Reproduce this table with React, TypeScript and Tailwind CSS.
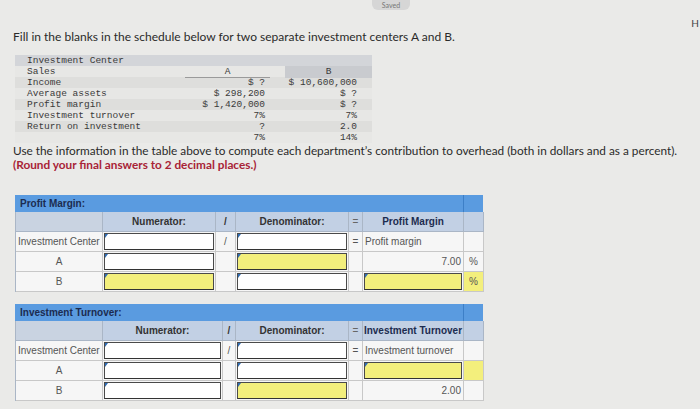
import React from "react";

type Cell =
  | { kind: "text"; text: string; align?: "left" | "center" | "right"; bold?: boolean; bg?: string }
  | { kind: "input"; yellow?: boolean; value?: string }
  | { kind: "empty"; bg?: string };

const dataRows: [string, string, string][] = [
  ["Investment Center", "", ""],
  ["Sales", "A", "B"],
  ["Income", "$ ?", "$ 10,600,000"],
  ["Average assets", "$ 298,200", "$ ?"],
  ["Profit margin", "$ 1,420,000", "$ ?"],
  ["Investment turnover", "7%", "7%"],
  ["Return on investment", "?", "2.0"],
  ["", "7%", "14%"],
];

function Marker() {
  return (
    <span className="absolute left-0 top-0 h-0 w-0 border-r-[3px] border-t-[4px] border-r-transparent border-t-[#2f6db5]" />
  );
}

function InputCell({ yellow, value }: { yellow?: boolean; value?: string }) {
  return (
    <div
      className={`relative mx-[1px] my-[1px] flex h-[17px] items-center justify-end border border-[#4a4a4a] border-b-[#333] px-[3px] text-[#444] ${
        yellow ? "bg-[#f3ef7c]" : "bg-white"
      }`}
    >
      <Marker />
      {value}
    </div>
  );
}

function RatioTable({
  title,
  result,
  rows,
  widths,
}: {
  title: string;
  result: string;
  rows: Cell[][];
  widths: string;
}) {
  return (
    <div className="w-[468px] text-[10px] text-[#333]" style={{ fontFamily: '"Liberation Sans", Arial, sans-serif' }}>
      <div className="flex h-[17px] bg-[#5a9be0]">
        <div className="flex flex-1 items-center px-[5px] font-bold text-[#1c2c50]">{title}</div>
        <div className="w-[20px] border-l border-[#3d7fc7]" />
      </div>
      <div className={`grid ${widths} border-l border-[#aab6c6] bg-[#f6f6f6]`}>
        <div className="h-[20px] border-b border-r border-[#aab6c6] bg-[#c9d3e1]" />
        <div className="flex items-center justify-center border-b border-r border-[#aab6c6] bg-[#c2d0e4] font-bold">Numerator:</div>
        <div className="flex items-center justify-center border-b border-r border-[#aab6c6] bg-[#c2d0e4] font-bold">/</div>
        <div className="flex items-center justify-center border-b border-r border-[#aab6c6] bg-[#c2d0e4] font-bold">Denominator:</div>
        <div className="flex items-center justify-center border-b border-r border-[#aab6c6] bg-[#c2d0e4] text-[#666]">=</div>
        <div className="flex items-center justify-center border-b border-r border-[#aab6c6] bg-[#c2d0e4] font-bold text-[#1c2c50]">{result}</div>
        <div className="border-b border-r border-[#aab6c6] bg-[#c2d0e4]" />
        {rows.map((row, ri) =>
          row.map((cell, ci) => {
            const key = `${ri}-${ci}`;
            if (cell.kind === "input") {
              return (
                <div key={key} className="border-b border-r border-[#c8c8c8]">
                  <InputCell yellow={cell.yellow} value={cell.value} />
                </div>
              );
            }
            if (cell.kind === "empty") {
              return <div key={key} className={`h-[20px] border-b border-r border-[#c8c8c8] ${cell.bg ?? ""}`} />;
            }
            const align =
              cell.align === "center" ? "justify-center" : cell.align === "right" ? "justify-end" : "justify-start";
            return (
              <div
                key={key}
                className={`flex h-[20px] items-center border-b border-r border-[#c8c8c8] px-[2px] text-[#555] ${align} ${
                  cell.bg ?? ""
                }`}
              >
                {cell.text}
              </div>
            );
          })
        )}
      </div>
    </div>
  );
}

const pmRows: Cell[][] = [
  [
    { kind: "text", text: "Investment Center" },
    { kind: "input" },
    { kind: "text", text: "/", align: "center" },
    { kind: "input" },
    { kind: "text", text: "=", align: "center" },
    { kind: "text", text: "Profit margin" },
    { kind: "empty" },
  ],
  [
    { kind: "text", text: "A", align: "center" },
    { kind: "input" },
    { kind: "empty" },
    { kind: "input", yellow: true },
    { kind: "empty" },
    { kind: "text", text: "7.00", align: "right" },
    { kind: "text", text: "%", align: "center" },
  ],
  [
    { kind: "text", text: "B", align: "center" },
    { kind: "input", yellow: true },
    { kind: "empty" },
    { kind: "input" },
    { kind: "empty" },
    { kind: "input", yellow: true },
    { kind: "text", text: "%", align: "center", bg: "bg-[#f3ef7c]" },
  ],
];

const itRows: Cell[][] = [
  [
    { kind: "text", text: "Investment Center" },
    { kind: "input" },
    { kind: "text", text: "/", align: "center" },
    { kind: "input" },
    { kind: "text", text: "=", align: "center" },
    { kind: "text", text: "Investment turnover" },
    { kind: "empty" },
  ],
  [
    { kind: "text", text: "A", align: "center" },
    { kind: "input" },
    { kind: "empty" },
    { kind: "input" },
    { kind: "empty" },
    { kind: "input", yellow: true },
    { kind: "empty", bg: "bg-[#f3ef7c]" },
  ],
  [
    { kind: "text", text: "B", align: "center" },
    { kind: "input" },
    { kind: "empty" },
    { kind: "input", yellow: true },
    { kind: "empty" },
    { kind: "text", text: "2.00", align: "right" },
    { kind: "empty" },
  ],
];

export default function App() {
  return (
    <div
      className="h-[409px] w-[700px] overflow-hidden bg-[#eaeae8] text-[#2a2a2a]"
      style={{ fontFamily: 'Lato, "Open Sans", sans-serif' }}
    >
      <div className="flex h-[10px]">
        <div className="ml-[372px] flex h-[10px] w-[38px] items-end justify-center rounded-b-[6px] bg-[#d6d6d6] text-[7px] leading-[9px] text-[#777]">
          Saved
        </div>
      </div>
      <div className="flex h-[14px] justify-end pr-[1px] pt-[8px] text-[10px] leading-[10px] text-[#444]">H</div>
      <p className="ml-[13px] mt-[6px] text-[12px] leading-[14px]">
        Fill in the blanks in the schedule below for two separate investment centers A and B.
      </p>

      <div
        className="ml-[15px] mt-[11px] w-[357px] text-[9.5px] text-[#3a3a3a]"
        style={{ fontFamily: '"Liberation Mono", "DejaVu Sans Mono", monospace' }}
      >
        {dataRows.map((r, i) => (
          <div
            key={i}
            className={`grid h-[11px] grid-cols-[170px_85px_102px] leading-[11px] ${
              i === 0 ? "bg-[#d3d5d9]" : i % 2 === 0 ? "bg-[#dededc]" : "bg-[#e7e7e5]"
            }`}
          >
            <div className="pl-[12px]">{r[0]}</div>
            {i === 1 ? (
              <>
                <div className="border-b border-[#9a9a9a] text-center">{r[1]}</div>
                <div className="ml-[15px] bg-[#c9cbcf] text-center">{r[2]}</div>
              </>
            ) : (
              <>
                <div className="pr-[5px] text-right">{r[1]}</div>
                <div className="pr-[15px] text-right">{r[2]}</div>
              </>
            )}
          </div>
        ))}
      </div>

      <p className="ml-[13px] mt-[1px] text-[11.8px] leading-[14px]">
        Use the information in the table above to compute each department’s contribution to overhead (both in dollars
        and as a percent).
      </p>
      <p className="ml-[13px] text-[11.8px] font-bold leading-[14px] text-[#a82336]">
        (Round your final answers to 2 decimal places.)
      </p>

      <div className="ml-[15px] mt-[23px]">
        <RatioTable
          title="Profit Margin:"
          result="Profit Margin"
          rows={pmRows}
          widths="grid-cols-[87px_113px_20px_113px_14px_101px_20px]"
        />
      </div>
      <div className="ml-[15px] mt-[12px]">
        <RatioTable
          title="Investment Turnover:"
          result="Investment Turnover"
          rows={itRows}
          widths="grid-cols-[87px_120px_13px_113px_14px_101px_20px]"
        />
      </div>
    </div>
  );
}
